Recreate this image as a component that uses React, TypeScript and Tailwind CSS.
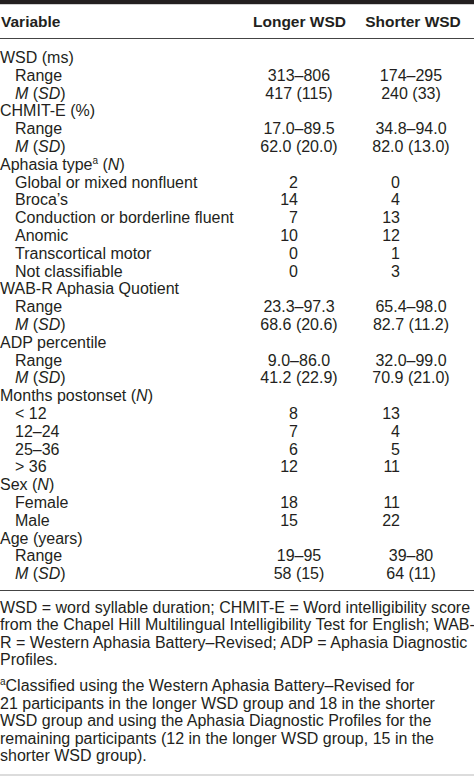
type Cell = string | React.ReactNode;

type Row = {
  label: React.ReactNode;
  indent?: boolean;
  longer?: Cell;
  shorter?: Cell;
  count?: boolean;
};

const MSD = (
  <>
    <i>M</i> (<i>SD</i>)
  </>
);

const rows: Row[] = [
  { label: "WSD (ms)" },
  { label: "Range", indent: true, longer: "313–806", shorter: "174–295" },
  { label: MSD, indent: true, longer: "417 (115)", shorter: "240 (33)" },
  { label: "CHMIT-E (%)" },
  { label: "Range", indent: true, longer: "17.0–89.5", shorter: "34.8–94.0" },
  { label: MSD, indent: true, longer: "62.0 (20.0)", shorter: "82.0 (13.0)" },
  {
    label: (
      <>
        Aphasia type<sup className="text-[10px] -top-[6px]">a</sup> (<i>N</i>)
      </>
    ),
  },
  { label: "Global or mixed nonfluent", indent: true, longer: "2", shorter: "0", count: true },
  { label: "Broca’s", indent: true, longer: "14", shorter: "4", count: true },
  { label: "Conduction or borderline fluent", indent: true, longer: "7", shorter: "13", count: true },
  { label: "Anomic", indent: true, longer: "10", shorter: "12", count: true },
  { label: "Transcortical motor", indent: true, longer: "0", shorter: "1", count: true },
  { label: "Not classifiable", indent: true, longer: "0", shorter: "3", count: true },
  { label: "WAB-R Aphasia Quotient" },
  { label: "Range", indent: true, longer: "23.3–97.3", shorter: "65.4–98.0" },
  { label: MSD, indent: true, longer: "68.6 (20.6)", shorter: "82.7 (11.2)" },
  { label: "ADP percentile" },
  { label: "Range", indent: true, longer: "9.0–86.0", shorter: "32.0–99.0" },
  { label: MSD, indent: true, longer: "41.2 (22.9)", shorter: "70.9 (21.0)" },
  {
    label: (
      <>
        Months postonset (<i>N</i>)
      </>
    ),
  },
  { label: "< 12", indent: true, longer: "8", shorter: "13", count: true },
  { label: "12–24", indent: true, longer: "7", shorter: "4", count: true },
  { label: "25–36", indent: true, longer: "6", shorter: "5", count: true },
  { label: "> 36", indent: true, longer: "12", shorter: "11", count: true },
  {
    label: (
      <>
        Sex (<i>N</i>)
      </>
    ),
  },
  { label: "Female", indent: true, longer: "18", shorter: "11", count: true },
  { label: "Male", indent: true, longer: "15", shorter: "22", count: true },
  { label: "Age (years)" },
  { label: "Range", indent: true, longer: "19–95", shorter: "39–80" },
  { label: MSD, indent: true, longer: "58 (15)", shorter: "64 (11)" },
];

export default function App() {
  return (
    <div className="w-[474px] h-[776px] overflow-hidden bg-white text-[#231f20] text-[16px] font-['Liberation_Sans',Arial,sans-serif]">
      <div className="h-[4px] bg-[#231f20]" />
      <div className="h-[35px] flex items-center whitespace-nowrap border-t border-[#cfcfcf] border-b-[1.5px] border-b-[#444] font-bold text-[15.5px]">
        <div className="w-[253px] pl-[1px]">Variable</div>
        <div className="w-[92px] text-center">Longer WSD</div>
        <div className="w-[96px] ml-[20px] text-center">Shorter WSD</div>
      </div>

      <div className="pt-[10px] pb-[7px] border-b-[1.5px] border-[#444]">
        {rows.map((row, i) => (
          <div key={i} className="flex leading-[17.8px] h-[17.8px] whitespace-nowrap">
            <div className={`w-[253px] ${row.indent ? "pl-[15px]" : "pl-0"}`}>{row.label}</div>
            <div className={`w-[92px] ${row.count ? "text-right pr-[47px]" : "text-center"}`}>
              {row.longer}
            </div>
            <div className={`w-[96px] ml-[20px] ${row.count ? "text-right pr-[61px]" : "text-center pr-[4px]"}`}>
              {row.shorter}
            </div>
          </div>
        ))}
      </div>

      <div className="pt-[8px] leading-[17.5px] whitespace-nowrap">
        <p>
          WSD = word syllable duration; CHMIT-E = Word intelligibility score
          <br />
          from the Chapel Hill Multilingual Intelligibility Test for English; WAB-
          <br />
          R = Western Aphasia Battery–Revised; ADP = Aphasia Diagnostic
          <br />
          Profiles.
        </p>
        <p className="mt-[8.5px]">
          <sup className="text-[10px] -top-[6px]">a</sup>Classified using the Western Aphasia Battery–Revised for
          <br />
          21 participants in the longer WSD group and 18 in the shorter
          <br />
          WSD group and using the Aphasia Diagnostic Profiles for the
          <br />
          remaining participants (12 in the longer WSD group, 15 in the
          <br />
          shorter WSD group).
        </p>
      </div>
      <div className="mt-[9px] h-[4px] bg-[#dcdcdc]" />
    </div>
  );
}
